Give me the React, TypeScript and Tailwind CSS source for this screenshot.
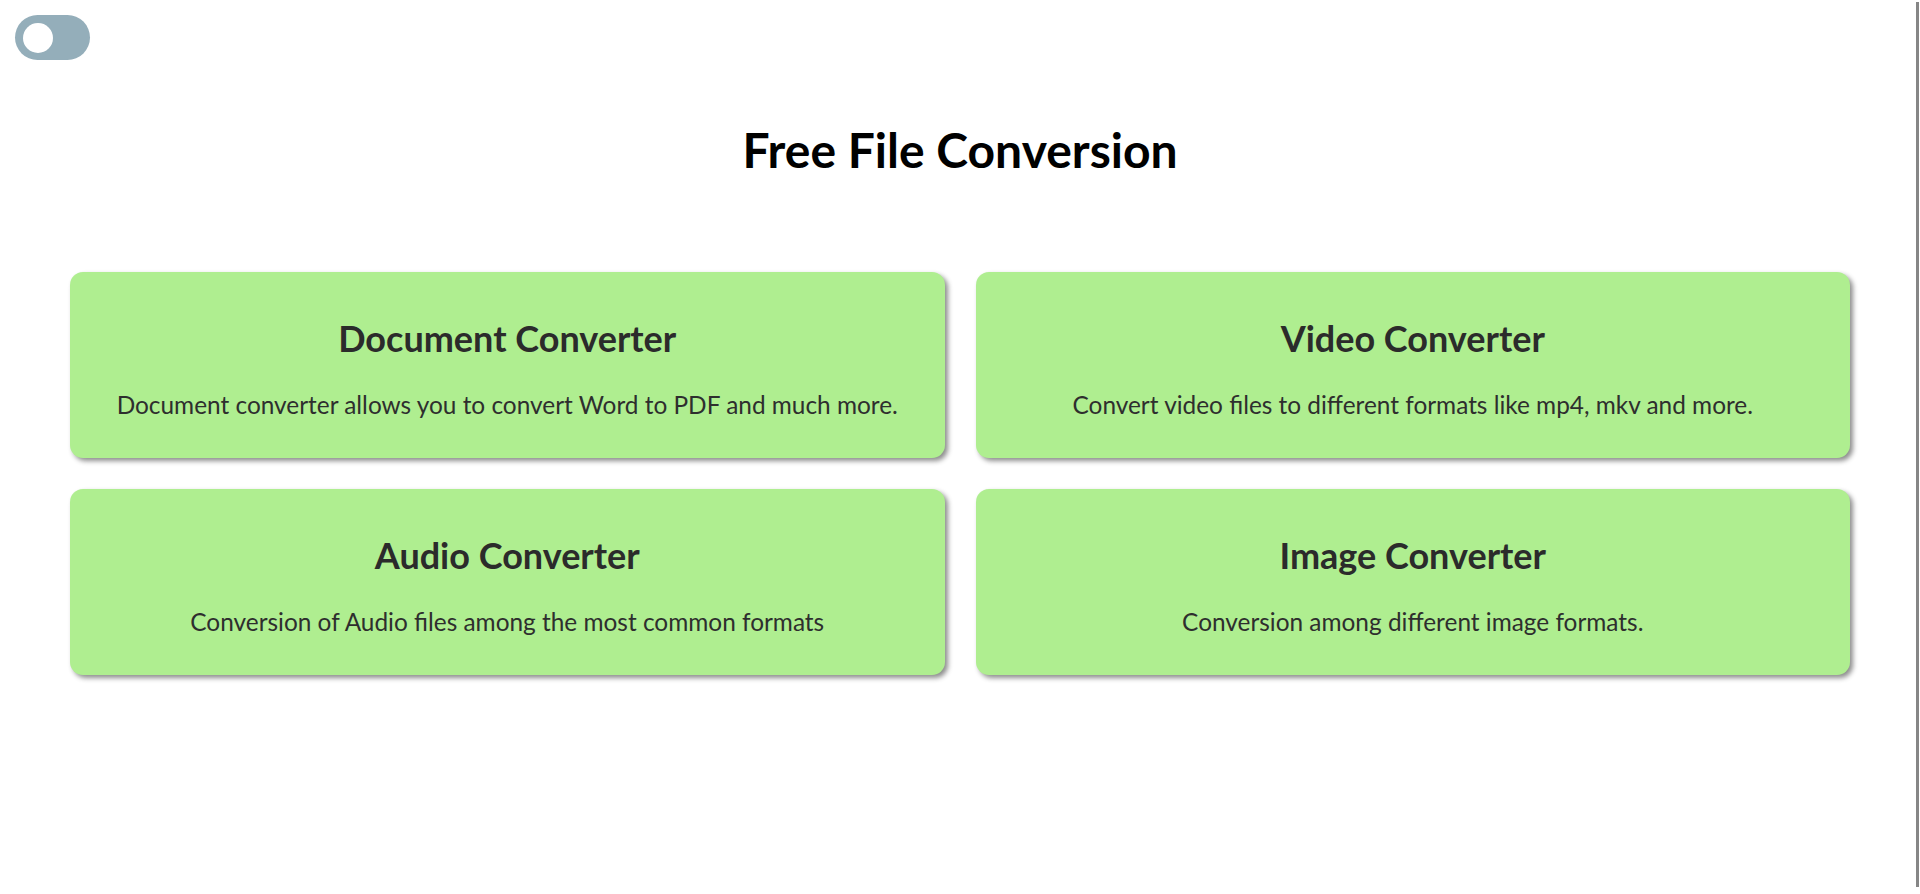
import React from 'react';

interface Converter {
  title: string;
  description: string;
}

// The four converter cards, in reading order
const CONVERTERS: Converter[] = [
  {
    title: 'Document Converter',
    description: 'Document converter allows you to convert Word to PDF and much more.',
  },
  {
    title: 'Video Converter',
    description: 'Convert video files to different formats like mp4, mkv and more.',
  },
  {
    title: 'Audio Converter',
    description: 'Conversion of Audio files among the most common formats',
  },
  {
    title: 'Image Converter',
    description: 'Conversion among different image formats.',
  },
];

const ThemeToggle: React.FC = () => (
  <button
    type="button"
    aria-label="Toggle theme"
    className="flex items-center w-[75px] h-[45px] pl-[8px] rounded-full bg-[#94aeba]"
  >
    <span className="block w-[30px] h-[30px] rounded-full bg-white" />
  </button>
);

const ConverterCard: React.FC<{ converter: Converter }> = ({ converter }) => (
  <div className="h-[186px] pt-[48px] rounded-[13px] bg-[#afee90] text-center shadow-[3px_3px_5px_rgba(0,0,0,0.45)] cursor-pointer">
    <h2 className="text-[36px] leading-none font-bold text-[#2b2b2b]">{converter.title}</h2>
    <p className="mt-[37px] text-[24.4px] leading-none text-[#2e2e2e]">{converter.description}</p>
  </div>
);

export default function App() {
  return (
    <div className="flex h-[894px] bg-white font-['Lato',sans-serif]">
      <main className="flex-1 min-w-0">
        {/* Header with theme switch */}
        <div className="pt-[15px] pl-[15px]">
          <ThemeToggle />
        </div>

        <div className="pl-[70px] pr-[66px]">
          <h1 className="mt-[66px] text-[48px] leading-none font-bold text-black text-center">
            Free File Conversion
          </h1>

          {/* Converter grid */}
          <div className="mt-[98px] grid grid-cols-2 gap-[31px]">
            {CONVERTERS.map((converter) => (
              <ConverterCard key={converter.title} converter={converter} />
            ))}
          </div>
        </div>
      </main>

      {/* Scrollbar strip */}
      <div className="w-[4px] pt-[2px] pb-[7px]">
        <div className="w-[3px] h-full bg-[#868686]" />
      </div>
    </div>
  );
}
